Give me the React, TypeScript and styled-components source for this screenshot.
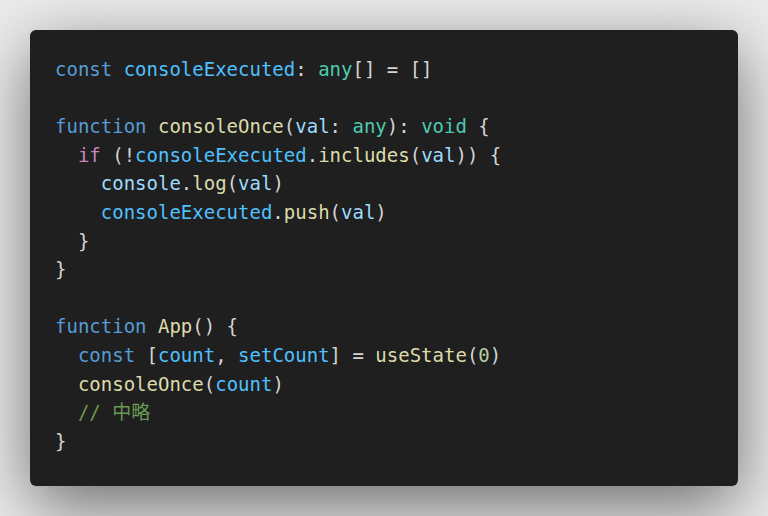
import React from "react";
import styled, { createGlobalStyle } from "styled-components";

const Global = createGlobalStyle`
  html, body { margin: 0; padding: 0; background: #ececec; }
  body { font-family: "DejaVu Sans Mono", "Noto Sans CJK JP", monospace; }
`;

const Page = styled.div`
  width: 768px;
  height: 516px;
  box-sizing: border-box;
  padding: 30px;
  display: flex;
  background: #ececec;
  overflow: hidden;
`;

const Card = styled.div`
  width: 708px;
  height: 456px;
  box-sizing: border-box;
  background: #1f1f1f;
  border-radius: 6px;
  box-shadow: rgba(0, 0, 0, 0.55) 0px 20px 68px;
  padding: 25px 25px;
`;

const Code = styled.pre`
  margin: 0;
  font-family: "DejaVu Sans Mono", "Noto Sans CJK JP", monospace;
  font-size: 19px;
  line-height: 28.6px;
  color: #d4d4d4;
  white-space: pre;
`;

const Line = styled.div`
  height: 28.6px;
`;

type Kind = "kw" | "var" | "prm" | "type" | "fn" | "ctl" | "num" | "cmt" | "p";

const colors: Record<Kind, string> = {
  kw: "#569cd6",
  var: "#4fc1ff",
  prm: "#9cdcfe",
  type: "#4ec9b0",
  fn: "#dcdcaa",
  ctl: "#c586c0",
  num: "#b5cea8",
  cmt: "#6a9955",
  p: "#d4d4d4",
};

const Tok = styled.span<{ $k: Kind }>`
  color: ${(p) => colors[p.$k]};
`;

type T = [Kind, string];

const lines: T[][] = [
  [["kw", "const "], ["var", "consoleExecuted"], ["p", ": "], ["type", "any"], ["p", "[] = []"]],
  [],
  [["kw", "function "], ["fn", "consoleOnce"], ["p", "("], ["prm", "val"], ["p", ": "], ["type", "any"], ["p", "): "], ["type", "void"], ["p", " {"]],
  [["p", "  "], ["ctl", "if"], ["p", " (!"], ["var", "consoleExecuted"], ["p", "."], ["fn", "includes"], ["p", "("], ["prm", "val"], ["p", ")) {"]],
  [["p", "    "], ["prm", "console"], ["p", "."], ["fn", "log"], ["p", "("], ["prm", "val"], ["p", ")"]],
  [["p", "    "], ["var", "consoleExecuted"], ["p", "."], ["fn", "push"], ["p", "("], ["prm", "val"], ["p", ")"]],
  [["p", "  }"]],
  [["p", "}"]],
  [],
  [["kw", "function "], ["fn", "App"], ["p", "() {"]],
  [["p", "  "], ["kw", "const "], ["p", "["], ["var", "count"], ["p", ", "], ["var", "setCount"], ["p", "] = "], ["fn", "useState"], ["p", "("], ["num", "0"], ["p", ")"]],
  [["p", "  "], ["fn", "consoleOnce"], ["p", "("], ["var", "count"], ["p", ")"]],
  [["p", "  "], ["cmt", "// 中略"]],
  [["p", "}"]],
];

export default function App() {
  return (
    <>
      <Global />
      <Page>
        <Card>
          <Code>
            {lines.map((l, i) => (
              <Line key={i}>
                {l.map(([k, s], j) => (
                  <Tok key={j} $k={k}>
                    {s}
                  </Tok>
                ))}
              </Line>
            ))}
          </Code>
        </Card>
      </Page>
    </>
  );
}
